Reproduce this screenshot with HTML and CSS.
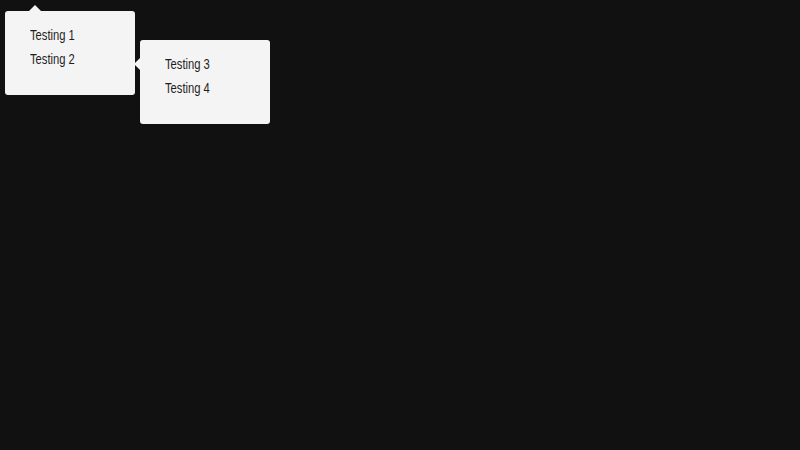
FILE: index.html
```html
<!DOCTYPE html>
<html>
<head>
<meta charset="utf-8">
<link rel="stylesheet" href="styles.css">
</head>
<body>
<div class="stage">
  <ul class="menu menu-top">
    <li class="item"><span class="label">Testing 1</span></li>
    <li class="item"><span class="label">Testing 2</span></li>
  </ul>
  <ul class="menu menu-side">
    <li class="item"><span class="label">Testing 3</span></li>
    <li class="item"><span class="label">Testing 4</span></li>
  </ul>
</div>
</body>
</html>
```
FILE: styles.css
```css
html, body {
  margin: 0;
  padding: 0;
  background: #111111;
  height: 100%;
}
.stage {
  display: flex;
  align-items: flex-start;
  gap: 5px;
  padding: 11px 0 0 5px;
}
.menu {
  position: relative;
  list-style: none;
  margin: 0;
  width: 130px;
  height: 84px;
  box-sizing: border-box;
  padding: 12px 0 0;
  background: #f4f4f4;
  border-radius: 3px;
  font-family: "Liberation Sans", Arial, sans-serif;
  font-size: 14px;
  color: #1e1e1e;
}
.menu-side {
  margin-top: 29px;
}
.item {
  padding: 0 25px;
  line-height: 24px;
  height: 24px;
}
.label {
  display: inline-block;
  transform: scaleX(0.8);
  transform-origin: left center;
  white-space: nowrap;
}
.menu::before {
  content: "";
  position: absolute;
  width: 0;
  height: 0;
}
.menu-top::before {
  left: 24px;
  top: -6px;
  border-left: 6px solid transparent;
  border-right: 6px solid transparent;
  border-bottom: 6px solid #f4f4f4;
}
.menu-side::before {
  left: -6px;
  top: 18px;
  border-top: 6px solid transparent;
  border-bottom: 6px solid transparent;
  border-right: 6px solid #f4f4f4;
}
```
